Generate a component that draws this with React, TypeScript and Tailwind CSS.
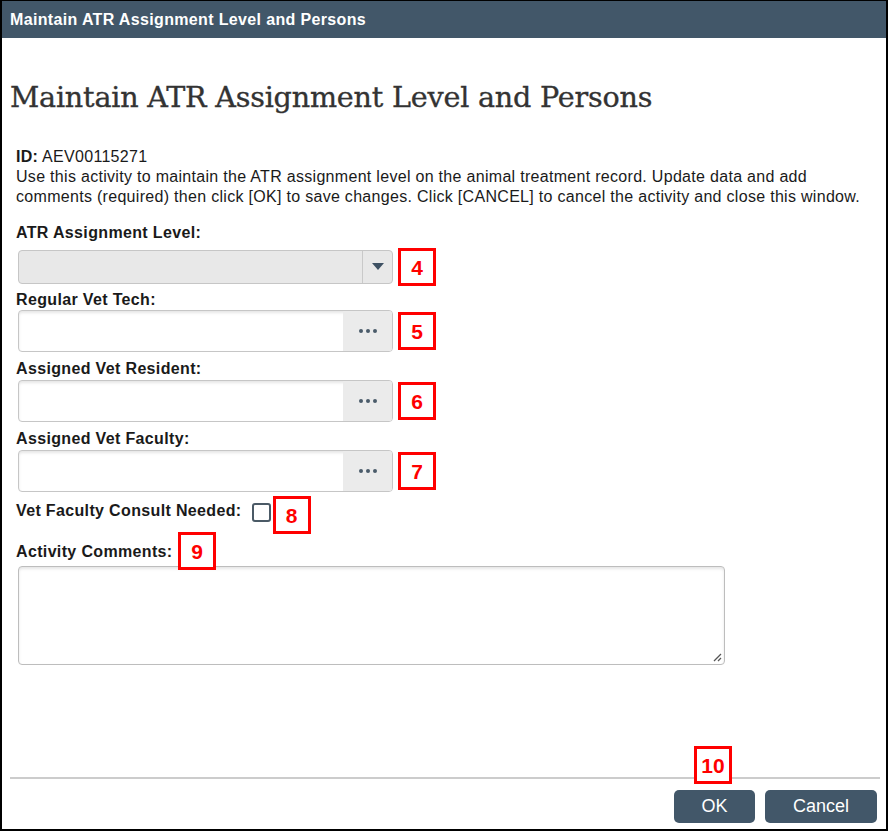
import React from "react";

function Badge({ n, className = "" }: { n: string; className?: string }) {
  return (
    <div
      className={`w-[38px] h-[38px] border-[3px] border-[#ff0000] bg-white flex items-center justify-center text-[#ff0000] font-bold text-[21px] leading-none ${className}`}
    >
      {n}
    </div>
  );
}

function LookupField({ label, badge, first }: { label: string; badge: string; first?: boolean }) {
  return (
    <div className="flex flex-col">
      <div
        className={`${first ? "mt-[4px] mb-[0px]" : "mt-[7px] mb-[1px]"} h-[20px] leading-[20px] text-[16px] tracking-[0.35px] font-bold text-[#1a1a1a]`}
      >
        {label}
      </div>
      <div className="flex items-center">
        <div className="ml-[2px] w-[375px] h-[42px] border border-[#c6c6c6] rounded-[4px] flex overflow-hidden bg-white shadow-[inset_0_2px_3px_rgba(0,0,0,0.10)]">
          <div className="flex-1" />
          <div className="w-[49px] h-full bg-[#ebebeb] flex items-center justify-center gap-[3px]">
            <span className="w-[4px] h-[4px] rounded-full bg-[#4a5b6a]" />
            <span className="w-[4px] h-[4px] rounded-full bg-[#4a5b6a]" />
            <span className="w-[4px] h-[4px] rounded-full bg-[#4a5b6a]" />
          </div>
        </div>
        <Badge n={badge} className="ml-[5px]" />
      </div>
    </div>
  );
}

export default function App() {
  return (
    <div className="w-[888px] h-[831px] bg-white border-2 border-t border-black flex flex-col font-['Liberation_Sans',Arial,sans-serif] text-[#1a1a1a] relative">
      <div className="h-[37px] bg-[#425769] text-white font-bold text-[16px] tracking-[0.35px] flex items-center pl-[8px] shrink-0">
        Maintain ATR Assignment Level and Persons
      </div>

      <div className="flex-1 flex flex-col pl-[8px]">
        <h1 className="mt-[39px] leading-[40px] text-[28.6px] font-['DejaVu_Serif',serif] text-[#333333] tracking-[-0.2px] [-webkit-text-stroke:0.35px_#333333]">
          Maintain ATR Assignment Level and Persons
        </h1>

        <div className="pl-[6px] flex flex-col">
          <div className="mt-[30px] text-[16px] tracking-[0.3px] leading-[20px]">
            <div>
              <span className="font-bold">ID:</span> AEV00115271
            </div>
            <div>
              Use this activity to maintain the ATR assignment level on the animal treatment record. Update data and add
            </div>
            <div>
              comments (required) then click [OK] to save changes. Click [CANCEL] to cancel the activity and close this window.
            </div>
          </div>

          <div className="mt-[16px] h-[20px] leading-[20px] text-[16px] tracking-[0.35px] font-bold">ATR Assignment Level:</div>
          <div className="mt-[5px] flex items-center">
            <div className="ml-[2px] w-[375px] h-[34px] border border-[#c6c6c6] rounded-[4px] bg-[#e8e8e8] flex">
              <div className="flex-1" />
              <div className="w-[30px] h-full border-l border-[#c9c9c9] flex items-center justify-center">
                <svg width="12" height="8" viewBox="0 0 12 8">
                  <path d="M0 0 L12 0 L6 7 Z" fill="#3e5163" />
                </svg>
              </div>
            </div>
            <Badge n="4" className="ml-[5px]" />
          </div>

          <LookupField label="Regular Vet Tech:" badge="5" first />
          <LookupField label="Assigned Vet Resident:" badge="6" />
          <LookupField label="Assigned Vet Faculty:" badge="7" />

          <div className="mt-[4px] flex items-center">
            <span className="text-[16px] tracking-[0.35px] font-bold leading-[20px] -mt-[8px]">Vet Faculty Consult Needed:</span>
            <span className="ml-[10px] w-[19px] h-[19px] border-2 border-[#4b5a66] rounded-[3px] bg-white -mt-[5px]" />
            <Badge n="8" className="ml-[2px]" />
          </div>

          <div className="mt-[6px] relative h-[20px]">
            <span className="text-[16px] tracking-[0.35px] font-bold leading-[20px]">Activity Comments:</span>
            <Badge n="9" className="absolute left-[162px] top-[-8px] z-10" />
          </div>
          <div className="mt-[6px] ml-[2px] w-[707px] h-[99px] border border-[#bdbdbd] rounded-[4px] bg-white shadow-[inset_0_2px_3px_rgba(0,0,0,0.10)] relative">
            <svg className="absolute right-[2px] bottom-[2px]" width="10" height="10" viewBox="0 0 10 10">
              <path d="M9 2 L2 9 M9 6 L6 9" stroke="#555" strokeWidth="1.3" />
            </svg>
          </div>
        </div>

        <div className="flex-1" />

        <div className="relative mr-[6px] h-[2px] bg-[#cccccc]">
          <Badge n="10" className="absolute left-[684px] top-[-31px] z-10" />
        </div>
        <div className="flex justify-end gap-[10px] pr-[9px] mt-[11px] mb-[6px]">
          <button className="w-[81px] h-[33px] rounded-[5px] bg-[#425769] text-white text-[18px]">OK</button>
          <button className="w-[112px] h-[33px] rounded-[5px] bg-[#425769] text-white text-[18px]">Cancel</button>
        </div>
      </div>
    </div>
  );
}
